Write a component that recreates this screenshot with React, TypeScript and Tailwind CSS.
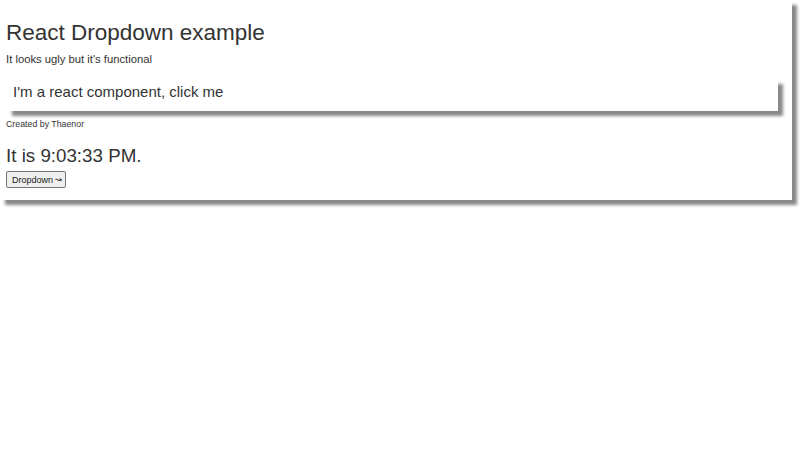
export default function App() {
  return (
    <div className="min-h-[450px] bg-white font-['Liberation_Sans',Arial,sans-serif] text-[#333]">
      <div className="w-[792px] px-[6px] pt-[18px] pb-[12px] shadow-[5px_5px_3px_#888]">
        <h1 className="text-[22.5px] leading-[30px]">React Dropdown example</h1>
        <p className="mt-[4px] text-[11.25px] leading-[14px]">It looks ugly but it's functional</p>
        <div className="ml-[1px] mt-[13px] w-[771px] px-[6px] pt-[4px] pb-[11px] shadow-[5px_5px_3px_#888]">
          <p className="text-[15px] leading-[17px]">I'm a react component, click me</p>
        </div>
        <p className="mt-[8px] text-[8.8px] leading-[10px]">Created by Thaenor</p>
        <p className="mt-[16px] text-[18.75px] leading-[22px]">It is 9:03:33 PM.</p>
        <button className="mt-[4px] flex h-[17px] w-[60px] items-center gap-[2px] rounded-[2px] border border-[#767676] bg-[#efefef] pl-[5px] text-[9px] leading-[14px] text-[#222]">
          <span>Dropdown</span>
          <span className="text-[8px]">↝</span>
        </button>
      </div>
    </div>
  );
}
